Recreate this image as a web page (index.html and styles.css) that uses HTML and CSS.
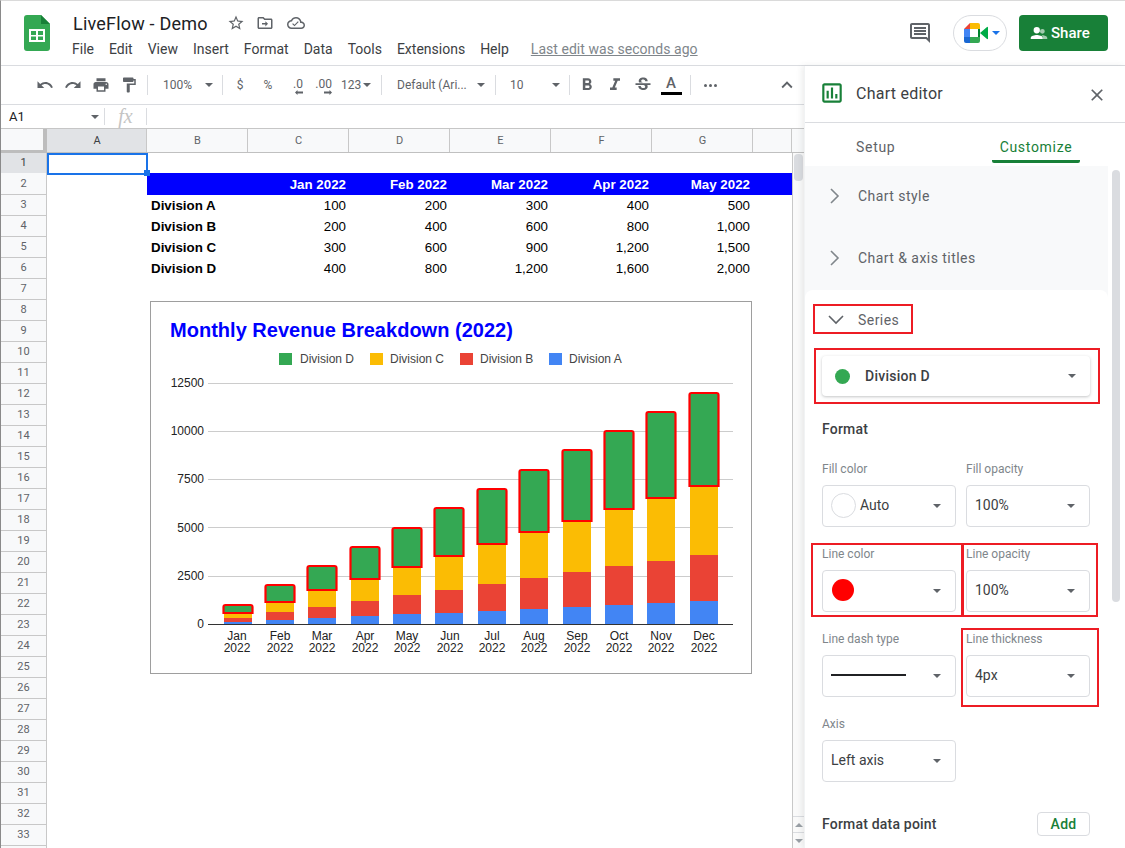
FILE: index.html
```html
<!DOCTYPE html>
<html lang="en">
<head>
<meta charset="utf-8">
<title>LiveFlow - Demo</title>
<link rel="stylesheet" href="styles.css">
</head>
<body>
<div class="app">
  <header class="topbar">
    <svg class="logo" viewBox="0 0 26 36"><path class="logo-doc" d="M0 3a3 3 0 0 1 3-3h14l9 9v24a3 3 0 0 1-3 3H3a3 3 0 0 1-3-3z"/><path class="logo-fold" d="M17 0l9 9h-9z"/><path class="logo-table" fill-rule="evenodd" d="M5 14h16v13H5zm2 2v4h5v-4zm7 0v4h5v-4zm-7 5.500V25h5v-3.500zm7 0V25h5v-3.500z"/></svg>
    <div class="docinfo">
      <div class="titlerow">
        <span class="doctitle">LiveFlow - Demo</span>
        <svg class="ticon star" viewBox="0 0 24 24"><path d="M22 9.240l-7.190-.62L12 2 9.190 8.630 2 9.240l5.460 4.730L5.820 21 12 17.270 18.180 21l-1.630-7.030L22 9.240zM12 15.400l-3.760 2.270 1-4.280-3.320-2.880 4.380-.38L12 6.100l1.710 4.040 4.380.38-3.320 2.880 1 4.280L12 15.400z"/></svg>
        <svg class="ticon folder" viewBox="0 0 24 24"><path d="M20 6h-8l-2-2H4c-1.100 0-2 .9-2 2v12c0 1.100.9 2 2 2h16c1.100 0 2-.9 2-2V8c0-1.100-.9-2-2-2zm0 12H4V6h5.170l2 2H20v10zM12.500 9.500L16 13l-3.500 3.500V14H8v-2h4.500z"/></svg>
        <svg class="ticon" viewBox="0 0 24 24"><path d="M19.350 10.040C18.670 6.590 15.640 4 12 4 9.110 4 6.600 5.640 5.350 8.040 2.340 8.360 0 10.910 0 14c0 3.310 2.690 6 6 6h13c2.760 0 5-2.240 5-5 0-2.640-2.050-4.780-4.650-4.960zM19 18H6c-2.210 0-4-1.790-4-4s1.790-4 4-4h.71C7.370 7.690 9.480 6 12 6c3.040 0 5.500 2.460 5.500 5.500v.5H19c1.660 0 3 1.340 3 3s-1.340 3-3 3zM10 14.200l-2-2-1.100 1.100 3.100 3.100 5.600-5.600-1.100-1.100z"/></svg>
      </div>
      <nav class="menu">
        <span>File</span><span>Edit</span><span>View</span><span>Insert</span><span>Format</span><span>Data</span><span>Tools</span><span>Extensions</span><span>Help</span>
        <span class="lastedit">Last edit was seconds ago</span>
      </nav>
    </div>
    <div class="actions">
      <svg class="comment" viewBox="0 0 24 24"><path d="M21.990 4c0-1.100-.89-2-1.990-2H4c-1.100 0-2 .9-2 2v12c0 1.100.9 2 2 2h14l4 4-.01-18zM20 4v13.170L18.830 16H4V4h16zM6 12h12v2H6zm0-3h12v2H6zm0-3h12v2H6z"/></svg>
      <div class="meet">
        <svg class="meet-icon" viewBox="0 0 24 20">
          <path fill="#fbbc04" d="M6 0h8a2 2 0 0 1 2 2v5h-2V6H6z"/>
          <path fill="#ea4335" d="M6 0v6H0z"/>
          <path fill="#4285f4" d="M0 6h6v8H0z"/>
          <path fill="#1967d2" d="M0 14h6v6H2a2 2 0 0 1-2-2z"/>
          <path fill="#34a853" d="M6 14h8v-1h2v5a2 2 0 0 1-2 2H6z"/>
          <path fill="#00832d" d="M14 6h2v8h-2z"/>
          <path fill="#00ac47" d="M16 10l7-6a.6.6 0 0 1 1 .5v11a.6.6 0 0 1-1 .5z"/>
        </svg>
        <span class="meet-caret"></span>
      </div>
      <button class="share">
        <svg viewBox="0 0 24 24"><path class="share-back" d="M16.500 13a3.200 3.200 0 1 0 0-6.400 3.200 3.200 0 0 0 0 6.400zm.5 2c-.6 0-1.200.05-1.800.15 1.100.8 1.800 1.700 1.800 2.850V20h6v-1.500c0-2.300-3.800-3.500-6-3.500z"/><path d="M9 12.500a4.200 4.200 0 1 0 0-8.400 4.200 4.200 0 0 0 0 8.400zm0 2c-2.700 0-8 1.300-8 3.800V20h16v-1.700c0-2.500-5.300-3.800-8-3.800z"/></svg>
        Share
      </button>
    </div>
  </header>

  <div class="workspace">
    <div class="sheet">
      <div class="toolbar">
        <span class="tb"><svg viewBox="0 0 24 24"><path d="M12.500 8c-2.650 0-5.050.99-6.900 2.600L2 7v9h9l-3.620-3.620c1.390-1.160 3.160-1.880 5.120-1.880 3.540 0 6.550 2.310 7.600 5.500l2.370-.78C21.080 11.030 17.150 8 12.500 8z"/></svg></span>
        <span class="tb"><svg viewBox="0 0 24 24"><path d="M18.400 10.600C16.550 8.990 14.150 8 11.500 8c-4.650 0-8.580 3.030-9.960 7.220L3.900 16c1.050-3.190 4.050-5.500 7.600-5.500 1.950 0 3.730.72 5.120 1.880L13 16h9V7l-3.600 3.600z"/></svg></span>
        <span class="tb"><svg viewBox="0 0 24 24"><path d="M19 8H5c-1.660 0-3 1.340-3 3v6h4v4h12v-4h4v-6c0-1.660-1.340-3-3-3zm-3 11H8v-5h8v5zm3-7c-.55 0-1-.45-1-1s.45-1 1-1 1 .45 1 1-.45 1-1 1zm-1-9H6v4h12V3z"/></svg></span>
        <span class="tb"><svg viewBox="0 0 24 24"><path d="M18 4V3c0-.55-.45-1-1-1H5c-.55 0-1 .45-1 1v4c0 .55.45 1 1 1h12c.55 0 1-.45 1-1V6h1v4H9v11c0 .55.45 1 1 1h2c.55 0 1-.45 1-1v-9h8V4h-3z"/></svg></span>
        <span class="sep sep-first"></span>
        <span class="tdrop tdrop-zoom">100%<i class="caret"></i></span>
        <span class="sep"></span>
        <span class="tb tt">$</span>
        <span class="tb tt">%</span>
        <span class="tb tdec tdec-less">.0<svg viewBox="0 0 8 5"><path d="M0 2.500L2.500 0v1.500H8v2H2.500V5z"/></svg></span>
        <span class="tb tdec tdec-more">.00<svg viewBox="0 0 8 5"><path d="M8 2.500L5.500 0v1.500H0v2h5.500V5z"/></svg></span>
        <span class="tdrop tdrop-num">123<i class="caret"></i></span>
        <span class="sep"></span>
        <span class="tdrop tdrop-font">Default (Ari...<i class="caret"></i></span>
        <span class="sep"></span>
        <span class="tdrop tdrop-size">10<i class="caret"></i></span>
        <span class="sep"></span>
        <span class="tb tfmt"><svg viewBox="0 0 24 24"><path d="M15.600 10.790c.97-.67 1.650-1.770 1.650-2.790 0-2.260-1.750-4-4-4H7v14h7.040c2.090 0 3.710-1.700 3.710-3.790 0-1.520-.86-2.820-2.150-3.420zM10 6.500h3c.83 0 1.500.67 1.500 1.500s-.67 1.500-1.500 1.500h-3v-3zm3.500 9H10v-3h3.500c.83 0 1.500.67 1.500 1.500s-.67 1.500-1.500 1.500z"/></svg></span>
        <span class="tb tfmt"><svg viewBox="0 0 24 24"><path d="M10 4v3h2.210l-3.420 8H6v3h8v-3h-2.210l3.420-8H18V4z"/></svg></span>
        <span class="tb tfmt"><svg viewBox="0 0 24 24"><path d="M7.240 8.750c-.26-.48-.39-1.030-.39-1.670 0-.61.13-1.160.4-1.670.26-.5.63-.93 1.110-1.290.48-.35 1.050-.63 1.700-.83.66-.19 1.390-.29 2.180-.29.81 0 1.540.11 2.210.34.66.22 1.230.54 1.690.94.47.4.83.88 1.080 1.430.25.55.38 1.150.38 1.810h-3.010c0-.31-.05-.59-.15-.85-.09-.27-.24-.49-.44-.68-.2-.19-.45-.33-.75-.44-.3-.1-.66-.16-1.060-.16-.39 0-.74.04-1.030.13-.29.09-.53.21-.72.36-.19.16-.34.34-.44.55-.1.21-.15.43-.15.66 0 .48.25.88.74 1.210.38.25.77.48 1.410.7H7.390c-.05-.08-.11-.17-.15-.25zM21 12v-2H3v2h9.620c.18.07.4.14.55.2.37.17.66.34.87.51.21.17.35.36.43.57.07.2.11.43.11.69 0 .23-.05.45-.14.66-.09.2-.23.38-.42.53-.19.15-.42.26-.71.35-.29.08-.63.13-1.010.13-.43 0-.83-.04-1.180-.13s-.66-.23-.91-.42c-.25-.19-.45-.44-.59-.75-.14-.31-.25-.76-.25-1.210H6.400c0 .55.08 1.130.24 1.580.16.45.37.85.65 1.210.28.35.6.66.98.92.37.26.78.48 1.220.65.44.17.9.3 1.380.39.48.08.96.13 1.440.13.8 0 1.530-.09 2.180-.28s1.210-.45 1.670-.79c.46-.34.82-.77 1.070-1.270s.38-1.070.38-1.710c0-.6-.1-1.140-.31-1.610-.05-.11-.11-.23-.17-.33H21z"/></svg></span>
        <span class="tb tcolor">A<i class="colorbar"></i></span>
        <span class="sep sep-more"></span>
        <span class="tb tmore"><i></i><i></i><i></i></span>
        <span class="tb tcollapse"><svg viewBox="0 0 24 24"><path d="M7.410 15.410L12 10.830l4.590 4.580L18 14l-6-6-6 6z"/></svg></span>
      </div>
      <div class="formula">
        <span class="namebox">A1<i class="caret"></i></span>
        <span class="fx">fx</span>
      </div>
      <div class="colhead">
        <span class="corner"></span>
        <span class="ch ch-sel">A</span><span class="ch">B</span><span class="ch">C</span><span class="ch">D</span><span class="ch">E</span><span class="ch">F</span><span class="ch">G</span><span class="ch"></span>
      </div>
      <div class="sheetbody">
        <div class="rows">
          <div class="row row-first"><span class="rh rh-sel">1</span><span class="c c-active"></span></div>
          <div class="row row-blue"><span class="rh">2</span><span class="c"></span><span class="c"></span><span class="c">Jan 2022</span><span class="c">Feb 2022</span><span class="c">Mar 2022</span><span class="c">Apr 2022</span><span class="c">May 2022</span></div>
          <div class="row"><span class="rh">3</span><span class="c"></span><span class="c c-b">Division A</span><span class="c">100</span><span class="c">200</span><span class="c">300</span><span class="c">400</span><span class="c">500</span></div>
          <div class="row"><span class="rh">4</span><span class="c"></span><span class="c c-b">Division B</span><span class="c">200</span><span class="c">400</span><span class="c">600</span><span class="c">800</span><span class="c">1,000</span></div>
          <div class="row"><span class="rh">5</span><span class="c"></span><span class="c c-b">Division C</span><span class="c">300</span><span class="c">600</span><span class="c">900</span><span class="c">1,200</span><span class="c">1,500</span></div>
          <div class="row"><span class="rh">6</span><span class="c"></span><span class="c c-b">Division D</span><span class="c">400</span><span class="c">800</span><span class="c">1,200</span><span class="c">1,600</span><span class="c">2,000</span></div>
          <div class="row"><span class="rh">7</span></div><div class="row"><span class="rh">8</span></div><div class="row"><span class="rh">9</span></div><div class="row"><span class="rh">10</span></div>
          <div class="row"><span class="rh">11</span></div><div class="row"><span class="rh">12</span></div><div class="row"><span class="rh">13</span></div><div class="row"><span class="rh">14</span></div>
          <div class="row"><span class="rh">15</span></div><div class="row"><span class="rh">16</span></div><div class="row"><span class="rh">17</span></div><div class="row"><span class="rh">18</span></div>
          <div class="row"><span class="rh">19</span></div><div class="row"><span class="rh">20</span></div><div class="row"><span class="rh">21</span></div><div class="row"><span class="rh">22</span></div>
          <div class="row"><span class="rh">23</span></div><div class="row"><span class="rh">24</span></div><div class="row"><span class="rh">25</span></div><div class="row"><span class="rh">26</span></div>
          <div class="row"><span class="rh">27</span></div><div class="row"><span class="rh">28</span></div><div class="row"><span class="rh">29</span></div><div class="row"><span class="rh">30</span></div>
          <div class="row"><span class="rh">31</span></div><div class="row"><span class="rh">32</span></div><div class="row"><span class="rh">33</span></div><div class="row"><span class="rh"></span></div>
        </div>
        <div class="vscroll">
          <span class="thumb"></span>
          <span class="varrow varrow-up"><i></i></span>
          <span class="varrow varrow-down"><i></i></span>
        </div>
        <span class="fillhandle"></span>
        <svg class="chart" viewBox="151 302 600 371">
          <text class="chart-title" x="170" y="337">Monthly Revenue Breakdown (2022)</text>
          <g class="legend">
            <rect class="s-d" x="279" y="353" width="13" height="12"/><text x="300" y="363">Division D</text>
            <rect class="s-c" x="370" y="353" width="13" height="12"/><text x="390" y="363">Division C</text>
            <rect class="s-b" x="460" y="353" width="13" height="12"/><text x="480" y="363">Division B</text>
            <rect class="s-a" x="549" y="353" width="13" height="12"/><text x="569" y="363">Division A</text>
          </g>
          <path class="gridline" d="M208 383.500H733M208 431.500H733M208 479.500H733M208 527.500H733M208 576.500H733"/>
          <g class="ylabels">
            <text x="204" y="387">12500</text><text x="204" y="435">10000</text><text x="204" y="483">7500</text><text x="204" y="532">5000</text><text x="204" y="580">2500</text><text x="204" y="628">0</text>
          </g>
          <g class="s-d">
            <rect x="224" y="605" width="28" height="19"/><rect x="266" y="585" width="28" height="39"/><rect x="308" y="566" width="28" height="58"/><rect x="351" y="547" width="28" height="77"/><rect x="393" y="528" width="28" height="96"/><rect x="435" y="508" width="28" height="116"/><rect x="478" y="489" width="28" height="135"/><rect x="520" y="470" width="28" height="154"/><rect x="563" y="450" width="28" height="174"/><rect x="605" y="431" width="28" height="193"/><rect x="647" y="412" width="28" height="212"/><rect x="690" y="393" width="28" height="231"/>
          </g>
          <g class="s-c">
            <rect x="224" y="612" width="28" height="12"/><rect x="266" y="601" width="28" height="23"/><rect x="308" y="589" width="28" height="35"/><rect x="351" y="578" width="28" height="46"/><rect x="393" y="566" width="28" height="58"/><rect x="435" y="555" width="28" height="69"/><rect x="478" y="543" width="28" height="81"/><rect x="520" y="531" width="28" height="93"/><rect x="563" y="520" width="28" height="104"/><rect x="605" y="508" width="28" height="116"/><rect x="647" y="497" width="28" height="127"/><rect x="690" y="485" width="28" height="139"/>
          </g>
          <g class="s-b">
            <rect x="224" y="618" width="28" height="6"/><rect x="266" y="612" width="28" height="12"/><rect x="308" y="607" width="28" height="17"/><rect x="351" y="601" width="28" height="23"/><rect x="393" y="595" width="28" height="29"/><rect x="435" y="590" width="28" height="34"/><rect x="478" y="584" width="28" height="40"/><rect x="520" y="578" width="28" height="46"/><rect x="563" y="572" width="28" height="52"/><rect x="605" y="566" width="28" height="58"/><rect x="647" y="561" width="28" height="63"/><rect x="690" y="555" width="28" height="69"/>
          </g>
          <g class="s-a">
            <rect x="224" y="622" width="28" height="2"/><rect x="266" y="620" width="28" height="4"/><rect x="308" y="618" width="28" height="6"/><rect x="351" y="616" width="28" height="8"/><rect x="393" y="614" width="28" height="10"/><rect x="435" y="613" width="28" height="11"/><rect x="478" y="611" width="28" height="13"/><rect x="520" y="609" width="28" height="15"/><rect x="563" y="607" width="28" height="17"/><rect x="605" y="605" width="28" height="19"/><rect x="647" y="603" width="28" height="21"/><rect x="690" y="601" width="28" height="23"/>
          </g>
          <g class="outline">
            <path d="M223.500 613V607q0-2 2-2h25q2 0 2 2V613z"/>
            <path d="M265.500 602V587q0-2 2-2h25q2 0 2 2V602z"/>
            <path d="M307.500 590V568q0-2 2-2h25q2 0 2 2V590z"/>
            <path d="M350.500 579V549q0-2 2-2h25q2 0 2 2V579z"/>
            <path d="M392.500 567V530q0-2 2-2h25q2 0 2 2V567z"/>
            <path d="M434.500 556V510q0-2 2-2h25q2 0 2 2V556z"/>
            <path d="M477.500 544V491q0-2 2-2h25q2 0 2 2V544z"/>
            <path d="M519.500 532V472q0-2 2-2h25q2 0 2 2V532z"/>
            <path d="M562.500 521V452q0-2 2-2h25q2 0 2 2V521z"/>
            <path d="M604.500 509V433q0-2 2-2h25q2 0 2 2V509z"/>
            <path d="M646.500 498V414q0-2 2-2h25q2 0 2 2V498z"/>
            <path d="M689.500 486V395q0-2 2-2h25q2 0 2 2V486z"/>
          </g>
          <path class="axis" d="M208 624.500H733"/>
          <g class="xlabels">
            <text x="237" y="640">Jan</text><text x="237" y="652">2022</text>
            <text x="280" y="640">Feb</text><text x="280" y="652">2022</text>
            <text x="322" y="640">Mar</text><text x="322" y="652">2022</text>
            <text x="365" y="640">Apr</text><text x="365" y="652">2022</text>
            <text x="407" y="640">May</text><text x="407" y="652">2022</text>
            <text x="450" y="640">Jun</text><text x="450" y="652">2022</text>
            <text x="492" y="640">Jul</text><text x="492" y="652">2022</text>
            <text x="534" y="640">Aug</text><text x="534" y="652">2022</text>
            <text x="577" y="640">Sep</text><text x="577" y="652">2022</text>
            <text x="619" y="640">Oct</text><text x="619" y="652">2022</text>
            <text x="661" y="640">Nov</text><text x="661" y="652">2022</text>
            <text x="704" y="640">Dec</text><text x="704" y="652">2022</text>
          </g>
        </svg>
      </div>
    </div>

    <aside class="panel">
      <div class="panel-head">
        <svg class="panel-icon" viewBox="0 0 24 24"><path d="M9 17H7v-7h2v7zm4 0h-2V7h2v10zm4 0h-2v-4h2v4zm2 2H5V5h14v14zm0-16H5c-1.100 0-2 .9-2 2v14c0 1.100.9 2 2 2h14c1.100 0 2-.9 2-2V5c0-1.100-.9-2-2-2z"/></svg>
        <span class="panel-title">Chart editor</span>
        <svg class="panel-close" viewBox="0 0 24 24"><path d="M19 6.410L17.590 5 12 10.590 6.410 5 5 6.410 10.590 12 5 17.590 6.410 19 12 13.410 17.590 19 19 17.590 13.410 12z"/></svg>
      </div>
      <div class="tabs">
        <span class="tab tab-setup">Setup</span>
        <span class="tab tab-on">Customize</span>
      </div>
      <div class="panel-body">
        <div class="sections">
          <div class="sec"><svg class="chev" viewBox="0 0 12 18"><path d="M2 2l7 7-7 7"/></svg><span>Chart style</span></div>
          <div class="sec"><svg class="chev" viewBox="0 0 12 18"><path d="M2 2l7 7-7 7"/></svg><span>Chart &amp; axis titles</span></div>
          <div class="card">
            <div class="sec sec-open"><svg class="chev chev-down" viewBox="0 0 18 12"><path d="M2 2l7 7 7-7"/></svg><span>Series</span></div>
            <div class="series-select"><i class="dot-d"></i><span class="series-name">Division D</span><i class="caret"></i></div>
            <div class="heading">Format</div>
            <div class="fields">
              <div class="field"><label>Fill color</label><div class="sel"><span class="val"><i class="swatch-auto"></i>Auto</span><i class="caret"></i></div></div>
              <div class="field"><label>Fill opacity</label><div class="sel"><span class="val">100%</span><i class="caret"></i></div></div>
              <div class="field"><label>Line color</label><div class="sel"><span class="val"><i class="swatch-red"></i></span><i class="caret"></i></div></div>
              <div class="field"><label>Line opacity</label><div class="sel"><span class="val">100%</span><i class="caret"></i></div></div>
              <div class="field"><label>Line dash type</label><div class="sel"><span class="val"><i class="dash"></i></span><i class="caret"></i></div></div>
              <div class="field"><label>Line thickness</label><div class="sel"><span class="val">4px</span><i class="caret"></i></div></div>
              <div class="field"><label>Axis</label><div class="sel"><span class="val">Left axis</span><i class="caret"></i></div></div>
            </div>
            <div class="datapoint"><span class="heading-inline">Format data point</span><button class="add">Add</button></div>
          </div>
        </div>
        <div class="panel-scroll"></div>
      </div>
      <span class="mark mark-series"></span>
      <span class="mark mark-select"></span>
      <span class="mark mark-linecolor"></span>
      <span class="mark mark-lineopacity"></span>
      <span class="mark mark-thickness"></span>
    </aside>
  </div>
</div>
</body>
</html>
```
FILE: styles.css
```css
* { box-sizing: border-box; }
html, body { margin: 0; padding: 0; height: 100%; overflow: hidden; background: #fff; }
body { font-family: Roboto, "Liberation Sans", sans-serif; color: #3c4043; }
i { display: block; font-style: normal; }

.app { width: 1125px; height: 848px; display: flex; flex-direction: column; overflow: hidden; border-top: 1px solid #dadada; border-left: 1px solid #8a8a8a; }

/* top bar */
.topbar { height: 65px; flex: none; display: flex; align-items: flex-start; border-bottom: 1px solid #dadce0; position: relative; }
.logo { width: 26px; height: 36px; margin: 14px 0 0 23px; flex: none; }
.logo-doc { fill: #34a853; }
.logo-fold { fill: #188038; }
.logo-table { fill: #fff; }
.docinfo { margin-left: 22px; flex: none; }
.titlerow { display: flex; align-items: center; height: 20px; margin-top: 12px; }
.doctitle { font-size: 18px; color: #202124; width: 155px; padding-left: 1px; letter-spacing: .2px; }
.ticon { width: 18px; height: 18px; fill: #5f6368; margin-right: 13px; }
.star { margin-right: 11px; }
.menu { display: flex; gap: 15px; font-size: 14px; color: #3c4043; margin-top: 6px; height: 20px; line-height: 20px; }
.lastedit { margin-left: 7px; color: #80868b; text-decoration: underline; letter-spacing: .04px; }
.actions { margin-left: auto; display: flex; align-items: center; margin-top: 14px; padding-right: 17px; }
.comment { width: 24px; height: 24px; fill: #5f6368; margin-right: 21px; }
.meet { width: 54px; height: 36px; border: 1px solid #dadce0; border-radius: 18px; display: flex; align-items: center; padding-left: 10px; margin-right: 12px; }
.meet-icon { width: 24px; height: 20px; }
.meet-caret { width: 0; height: 0; border: 4px solid transparent; border-top: 4px solid #1a73e8; border-bottom: 0; margin-left: 4px; }
.share { width: 89px; height: 36px; background: #188038; color: #fff; border: 0; border-radius: 4px; font: 500 15px Roboto, sans-serif; display: flex; align-items: center; gap: 3px; padding: 0 0 0 11px; }
.share svg { width: 18px; height: 18px; fill: #fff; }
.share-back { opacity: .6; }

/* workspace */
.workspace { flex: 1; display: flex; min-height: 0; }
.sheet { width: 803px; flex: none; display: flex; flex-direction: column; min-height: 0; }

/* toolbar */
.toolbar { height: 39px; flex: none; display: flex; align-items: center; padding-left: 30px; border-bottom: 1px solid #dadce0; font-size: 12px; color: #5f6368; }
.tb { width: 28px; height: 28px; flex: none; display: flex; align-items: center; justify-content: center; }
.tb svg { width: 18px; height: 18px; fill: #5f6368; }
.tb.tfmt svg { width: 20px; height: 20px; }
.tt { font-size: 12px; }
.sep { width: 1px; height: 20px; background: #dadce0; flex: none; margin: 0 3px; }
.sep-first { margin: 0 0 0 4px; }
.caret { width: 0; height: 0; border: 4px solid transparent; border-top: 4px solid #5f6368; border-bottom: 0; flex: none; }
.tdrop { display: flex; align-items: center; flex: none; height: 28px; justify-content: space-between; }
.tdrop-zoom { width: 71px; padding: 0 6px 0 15px; }
.tdrop-num { width: 40px; padding-left: 3px; justify-content: flex-start; }
.tdrop-num .caret { margin-left: 2px; }
.tdrop-font { width: 107px; padding: 0 7px 0 12px; }
.tdrop-size { width: 67px; padding: 0 6px 0 11px; }
.tdec { flex-direction: column; align-items: flex-end; justify-content: flex-start; padding-top: 8px; line-height: 11px; }
.tdec-less { padding-right: 7px; }
.tdec-more { padding-right: 6px; }
.tb.tdec svg { width: 8px; height: 5px; }
.tcolor { flex-direction: column; font-size: 15px; line-height: 14px; font-weight: 500; }
.colorbar { width: 21px; height: 3px; background: #000; margin-top: 2px; }
.sep-more { margin: 0 5px; }
.tmore { gap: 2px; }
.tmore i { width: 3px; height: 3px; border-radius: 50%; background: #5f6368; }
.tcollapse { margin-left: auto; margin-right: 3px; }
.tb.tcollapse svg { width: 22px; height: 22px; }

/* formula bar */
.formula { height: 24px; flex: none; display: flex; align-items: stretch; border-bottom: 1px solid #c6c6c6; font-size: 13px; color: #202124; }
.namebox { width: 104px; display: flex; align-items: center; justify-content: space-between; padding: 0 5px 0 8px; margin: 3px 0; border-right: 1px solid #dadce0; }
.fx { width: 42px; margin: 3px 0; border-right: 1px solid #dadce0; display: flex; align-items: center; justify-content: center; font: italic 20px "Liberation Serif", serif; color: #c4c4c4; }

/* column heads */
.colhead { height: 24px; flex: none; display: grid; grid-template-columns: 46px 100px repeat(6, 101px) 39px; background: #f8f9fa; border-bottom: 1px solid #c0c0c0; font-size: 11px; color: #5f6368; }
.corner { border-right: 4px solid #bdbdbd; border-bottom: 3px solid #bdbdbd; margin-bottom: -1px; }
.ch { border-right: 1px solid #c8c8c8; display: flex; align-items: center; justify-content: center; padding-left: 1px; }
.ch-sel { background: #e1e3e6; color: #3c4043; }

/* sheet body */
.sheetbody { flex: 1; min-height: 0; position: relative; overflow: hidden; display: flex; }
.rows { width: 791px; flex: none; }
.row { height: 21px; display: grid; grid-template-columns: 46px 100px repeat(6, 101px); font: 13.33px/22px "Liberation Sans", Arial, sans-serif; color: #000; }
.rh { background: #f8f9fa; border-right: 1px solid #c8c8c8; border-bottom: 1px solid #c8c8c8; font: 11px/20px Roboto, sans-serif; color: #5f6368; text-align: center; }
.rh-sel { background: #e1e3e6; color: #3c4043; }
.c { padding: 0 3px; text-align: right; white-space: nowrap; overflow: hidden; }
.c-b { font-weight: 700; text-align: left; padding-left: 4px; }
.c-active { border: 2px solid #1a73e8; margin-right: -1px; margin-bottom: -1px; position: relative; z-index: 1; }
.row-blue { background: linear-gradient(to right, transparent 146px, #0000ff 146px); color: #fff; font-weight: 700; height: 22px; line-height: 23px; }
.row-first { height: 20px; }
.row-blue .rh { line-height: 21px; }
.fillhandle { position: absolute; left: 143px; top: 17px; width: 6px; height: 6px; background: #1a73e8; z-index: 2; }
.vscroll { flex: 1; border-left: 1px solid #c8c8c8; padding-top: 1px; display: flex; flex-direction: column; background: #fafafa; }
.thumb { display: block; width: 9px; height: 27px; margin-left: 1px; background: #dadce0; border-radius: 4px; }
.varrow { height: 16px; border-top: 1px solid #dadce0; display: flex; align-items: center; justify-content: center; }
.varrow i { width: 0; height: 0; border: 4px solid transparent; }
.varrow-up { margin-top: auto; }
.varrow-up i { border-bottom: 4px solid #9aa0a6; border-top: 0; }
.varrow-down i { border-top: 4px solid #9aa0a6; border-bottom: 0; }

/* chart */
.chart { position: absolute; left: 149px; top: 148px; width: 602px; height: 373px; background: #fff; border: 1px solid #9e9e9e; font-family: "Liberation Sans", Arial, sans-serif; }
.chart-title { font-size: 20px; font-weight: 700; fill: #0000ff; letter-spacing: .02px; }
.legend text { font-size: 12px; fill: #444; }
.gridline { stroke: #ccc; stroke-width: 1; fill: none; }
.axis { stroke: #333; stroke-width: 1; fill: none; }
.ylabels text { font-size: 12px; fill: #222; text-anchor: end; }
.xlabels text { font-size: 12px; fill: #222; text-anchor: middle; }
.s-d { fill: #34a853; }
.s-c { fill: #fbbc04; }
.s-b { fill: #ea4335; }
.s-a { fill: #4285f4; }
.outline path { fill: none; stroke: #ff0000; stroke-width: 2.2; }

/* chart editor */
.panel { flex: 1; position: relative; border-left: 1px solid #f1f3f4; display: flex; flex-direction: column; min-height: 0; background: #fff; box-shadow: -2px 0 6px rgba(60,64,67,.1); z-index: 2; }
.panel-head { height: 57px; flex: none; display: flex; align-items: center; border-bottom: 1px solid #dadce0; padding: 0 18px 2px 14px; }
.panel-icon { width: 26px; height: 26px; fill: #188038; }
.panel-title { font-size: 16px; color: #3c4043; margin-left: 11px; letter-spacing: .25px; }
.panel-close { width: 20px; height: 20px; fill: #5f6368; margin-left: auto; margin-top: 4px; }
.tabs { height: 43px; flex: none; position: relative; display: flex; font-size: 14px; letter-spacing: .7px; }
.tab { padding-top: 16px; }
.tab-setup { margin-left: 51px; width: 40px; flex: none; white-space: nowrap; color: #5f6368; }
.tab-on { margin-left: 96px; width: 88px; text-align: center; color: #188038; height: 40px; border-bottom: 3px solid #188038; border-radius: 0 0 2px 2px; }
.panel-body { flex: 1; display: flex; min-height: 0; overflow: hidden; }
.sections { width: 303px; flex: none; background: #f8f9fa; }
.sec { height: 62px; display: flex; align-items: center; padding: 0 0 2px 24px; font-size: 14px; color: #5f6368; letter-spacing: .45px; }
.sec span { margin-left: 17px; }
.chev { width: 12px; height: 18px; fill: none; stroke: #80868b; stroke-width: 1.6; flex: none; }
.card { background: #fff; border-radius: 8px 8px 0 0; padding: 0 18px 0 17px; height: 600px; }
.sec-open { height: 60px; padding: 0 0 0 5px; }
.sec-open span { margin-left: 13px; }
.chev-down { width: 18px; height: 12px; stroke: #5f6368; }
.series-select { height: 40px; margin-top: 6px; background: #fff; border-radius: 4px; box-shadow: 0 1px 3px rgba(60,64,67,.3); display: flex; align-items: center; padding: 0 14px 0 13px; font-size: 14px; font-weight: 500; letter-spacing: .25px; }
.dot-d { width: 15px; height: 15px; border-radius: 50%; background: #34a853; }
.series-name { margin-left: 15px; flex: 1; }
.heading { margin-top: 24px; height: 18px; line-height: 18px; font-size: 14px; font-weight: 500; color: #3c4043; letter-spacing: .2px; }
.fields { display: grid; grid-template-columns: 134px 124px; column-gap: 10px; row-gap: 18px; margin-top: 22px; }
.field label { display: block; height: 16px; line-height: 18px; font-size: 12px; color: #80868b; margin-bottom: 9px; }
.sel { height: 42px; border: 1px solid #dadce0; border-radius: 4px; display: flex; align-items: center; justify-content: space-between; padding: 0 14px 0 8px; font-size: 14px; color: #3c4043; }
.val { display: flex; align-items: center; padding-bottom: 2px; }
.swatch-auto { width: 25px; height: 25px; border-radius: 50%; border: 1px solid #dadce0; margin-right: 4px; }
.swatch-red { width: 22px; height: 22px; border-radius: 50%; background: #ff0000; margin-left: 1px; }
.dash { width: 75px; height: 2px; background: #202124; }
.datapoint { margin-top: 30px; height: 24px; display: flex; align-items: center; justify-content: space-between; }
.heading-inline { font-size: 14px; font-weight: 500; color: #3c4043; letter-spacing: .2px; }
.add { width: 53px; height: 24px; background: #fff; border: 1px solid #dadce0; border-radius: 4px; color: #188038; font: 500 14px Roboto, sans-serif; letter-spacing: .25px; padding: 0; }
.panel-scroll { width: 8px; height: 432px; margin: 4px 0 0 4px; background: #dadce0; border-radius: 4px; }

/* red annotation boxes */
.mark { position: absolute; border: 2px solid #ed1c24; pointer-events: none; }
.mark-series { left: 8px; top: 238px; width: 100px; height: 30px; }
.mark-select { left: 9px; top: 282px; width: 286px; height: 56px; }
.mark-linecolor { left: 6px; top: 477px; width: 152px; height: 74px; }
.mark-lineopacity { left: 157px; top: 477px; width: 136px; height: 74px; }
.mark-thickness { left: 156px; top: 562px; width: 138px; height: 79px; }
```
